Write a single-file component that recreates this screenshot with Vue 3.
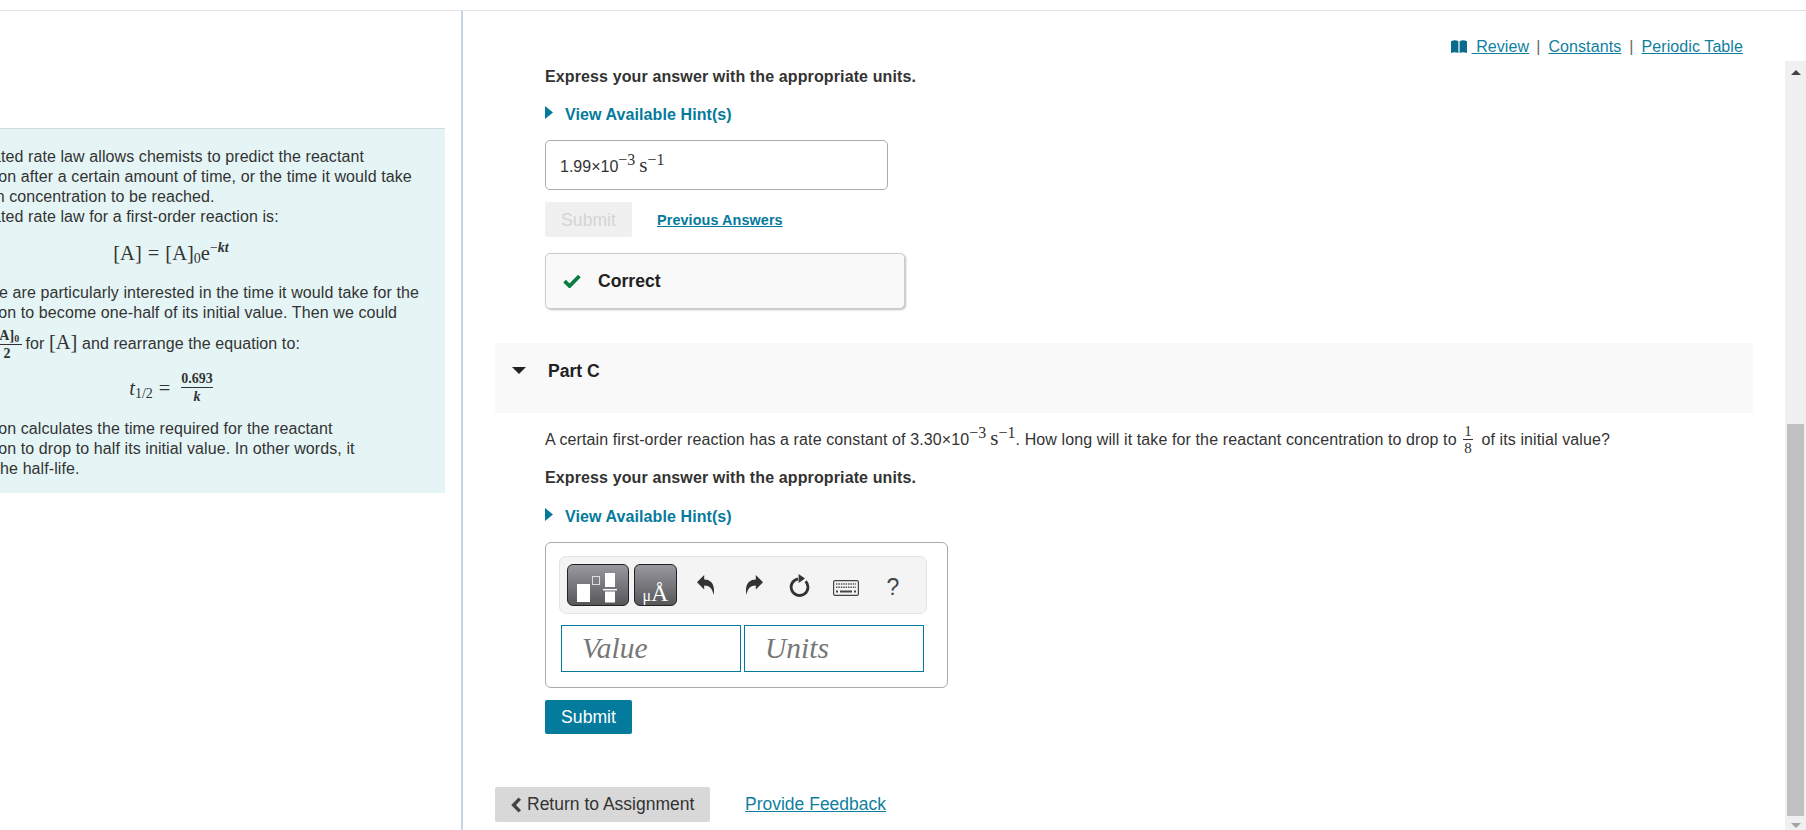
<script setup>
const sharedHint = 'View Available Hint(s)'
</script>

<template>
  <div class="page">
    <aside class="left">
      <section class="intro">
        <div class="intro-inner">
          <p>The integrated rate law allows chemists to predict the reactant<br>concentration after a certain amount of time, or the time it would take<br>for a certain concentration to be reached.<br>The integrated rate law for a first-order reaction is:</p>
          <div class="eq eq1">
            <span class="m big">[A]<span class="op">=</span>[A]<sub>0</sub>e<sup><span class="minus">−</span><b><i>kt</i></b></sup></span>
          </div>
          <p>Suppose we are particularly interested in the time it would take for the<br>concentration to become one-half of its initial value. Then we could</p>
          <p class="fracline">substitute
            <span class="frac small shifted"><span class="num">[A]<sub>0</sub></span><span class="den">2</span></span>
            for <span class="m big">[A]</span> and rearrange the equation to:</p>
          <div class="eq eq2">
            <span class="m big"><i>t</i><sub>1/2</sub><span class="op">=</span></span>
            <span class="frac small"><span class="num">0.693</span><span class="den"><b><i>k</i></b></span></span>
          </div>
          <p>This equation calculates the time required for the reactant<br>concentration to drop to half its initial value. In other words, it<br>calculates the half-life.</p>
        </div>
      </section>
    </aside>

    <main class="right">
      <nav class="toplinks">
        <svg class="book" viewBox="0 0 16 13" width="16" height="13" aria-hidden="true">
          <path d="M0 1.2 C2.5 0 5.5 0 7.4 1.2 V13 C5.5 11.9 2.5 11.9 0 13 Z M8.6 1.2 C10.5 0 13.5 0 16 1.2 V13 C13.5 11.9 10.5 11.9 8.6 13 Z" fill="#0b6b8c"/>
        </svg>
        <a class="link review">&nbsp;Review</a>
        <span class="sep first-sep">|</span>
        <a class="link">Constants</a>
        <span class="sep">|</span>
        <a class="link">Periodic Table</a>
      </nav>

      <div class="body">
        <div class="content">
          <div class="indent">
            <p class="strong first">Express your answer with the appropriate units.</p>
            <div class="hint">
              <svg class="tri" viewBox="0 0 8 13" width="8" height="13"><path d="M0 0 L8 6.5 L0 13 Z" fill="#047a9c"/></svg>
              <span>{{ sharedHint }}</span>
            </div>
            <div class="answer">
              <span>1.99×10</span><span class="exp">−3</span><span class="unit">s</span><span class="exp">−1</span>
            </div>
            <div class="actions">
              <span class="btn disabled">Submit</span>
              <a class="prev">Previous Answers</a>
            </div>
            <div class="correct">
              <svg viewBox="0 0 18 14" width="18" height="14"><path d="M1.6 7.2 L6.6 12 L16.4 2" fill="none" stroke="#0a7d3e" stroke-width="3.8"/></svg>
              <span>Correct</span>
            </div>
          </div>

          <div class="band">
            <svg viewBox="0 0 14 7" width="14" height="7"><path d="M0 0 H14 L7 7 Z" fill="#222"/></svg>
            <span>Part C</span>
          </div>

          <div class="indent">
            <div class="question">A certain first-order reaction has a rate constant of 3.30×10<span class="exp">−3</span><span class="unit">s</span><span class="exp">−1</span>. How long will it take for the reactant concentration to drop to <span class="qfrac"><span class="qn">1</span><span class="qd">8</span></span> of its initial value?</div>
            <p class="strong gap">Express your answer with the appropriate units.</p>
            <div class="hint lower">
              <svg class="tri" viewBox="0 0 8 13" width="8" height="13"><path d="M0 0 L8 6.5 L0 13 Z" fill="#047a9c"/></svg>
              <span>{{ sharedHint }}</span>
            </div>

            <div class="widget">
              <div class="toolbar">
                <div class="tbtn tpl">
                  <svg viewBox="1 1 60 40" width="60" height="40">
                    <rect x="10" y="20" width="13" height="18" fill="#fff"/>
                    <rect x="25.5" y="12.5" width="7" height="8" fill="none" stroke="#ddd" stroke-width="1"/>
                    <rect x="38" y="9" width="10" height="14" fill="#fff"/>
                    <rect x="36" y="25" width="14" height="1.4" fill="#fff"/>
                    <rect x="38" y="27.5" width="10" height="11" fill="#fff"/>
                  </svg>
                </div>
                <div class="tbtn mu"><span class="mu1">μ</span><span class="mu2">Å</span></div>
                <div class="tool t-undo">
                  <svg viewBox="0 0 18 20" width="18" height="20"><path d="M0 7.2 L7.2 0 V4.6 C13.5 4.6 18.6 9 16.6 20 C15.4 13.6 12.4 10.6 7.2 10.6 V14.4 Z" fill="#333"/></svg>
                </div>
                <div class="tool t-redo">
                  <svg viewBox="0 0 18 20" width="18" height="20"><path d="M18 7.2 L10.8 0 V4.6 C4.5 4.6 -0.6 9 1.4 20 C2.6 13.6 5.6 10.6 10.8 10.6 V14.4 Z" fill="#333"/></svg>
                </div>
                <div class="tool t-reset">
                  <svg viewBox="0 0 21 23" width="21" height="23">
                    <path d="M9 4.8 A8.4 8.4 0 1 0 16.6 7.2" fill="none" stroke="#333" stroke-width="2.8"/>
                    <path d="M9.6 0 L16 4.6 L9.6 9 Z" fill="#333"/>
                  </svg>
                </div>
                <div class="tool t-keys">
                  <svg viewBox="0 0 26 16" width="26" height="16">
                    <rect x="0.6" y="0.6" width="24.8" height="14.8" rx="1.4" fill="#f4f4f4" stroke="#444" stroke-width="1.2"/>
                    <path d="M3 4 H23" stroke="#555" stroke-width="1.6" stroke-dasharray="1.5 0.9"/>
                    <path d="M3 7.2 H23" stroke="#555" stroke-width="1.6" stroke-dasharray="1.5 0.9"/>
                    <path d="M3 11.5 H5 M7 11.5 H19 M21 11.5 H23" stroke="#444" stroke-width="1.8"/>
                  </svg>
                </div>
                <div class="tool t-help">?</div>
              </div>
              <div class="fields">
                <div class="field">Value</div>
                <div class="field">Units</div>
              </div>
            </div>

            <span class="btn primary">Submit</span>
          </div>

          <div class="footer">
            <span class="back">
              <svg viewBox="0 0 11 16" width="11" height="16"><path d="M8.8 1.6 L2.6 8 L8.8 14.4" fill="none" stroke="#444" stroke-width="3.4"/></svg>
              <span class="back-label">Return to Assignment</span>
            </span>
            <a class="link feedback">Provide Feedback</a>
          </div>
        </div>

        <div class="scrollbar" aria-hidden="true">
          <span class="arrow up"></span>
          <span class="thumb"></span>
          <span class="arrow down"></span>
        </div>
      </div>
    </main>
  </div>
</template>

<style>
html, body { margin: 0; background: #fff; overflow: hidden; }
</style>

<style scoped>
.page {
  width: 1806px;
  height: 830px;
  box-sizing: border-box;
  padding-top: 10px;
  display: flex;
  overflow: hidden;
  font-family: "Liberation Sans", Arial, sans-serif;
  font-size: 16px;
  line-height: 20px;
  letter-spacing: .09px;
  color: #333;
  background: linear-gradient(#e2e2e2, #e2e2e2) 0 10px / 100% 1px no-repeat #fff;
}
p { margin: 0; }

/* left passage */
.left {
  width: 461px;
  margin-top: 1px;
  flex: none;
  box-sizing: content-box;
  border-right: 2px solid #c6d5e3;
}
.intro {
  margin-top: 117px;
  width: 445px;
  height: 365px;
  box-sizing: border-box;
  border-top: 1px solid #d5dcdf;
  background: #e5f5f6;
  overflow: hidden;
}
.intro-inner {
  margin-left: -103px;
  width: 548px;
  box-sizing: border-box;
  padding: 18px 22px 0;
  white-space: nowrap;
}
.m { font-family: "Liberation Serif", serif; letter-spacing: 0; }
.big { font-size: 20.5px; }
.m sub, .m sup { font-size: 14px; line-height: 0; }
.m sup { vertical-align: 8px; }
.m sub { vertical-align: -3px; }
.op { margin: 0 6px; }
.minus { font-family: "Liberation Serif", serif; }
.eq { display: flex; align-items: center; justify-content: center; gap: 5px; }
.eq1 { height: 56px; box-sizing: border-box; padding-bottom: 4px; }
.eq2 { height: 57px; box-sizing: border-box; padding-bottom: 3px; margin-bottom: 1px; }
.fracline { height: 38px; line-height: 38px; }
.frac {
  display: inline-flex;
  flex-direction: column;
  align-items: center;
  vertical-align: middle;
  font-family: "Liberation Serif", serif;
  letter-spacing: 0;
  line-height: 1;
}
.shifted { margin-left: -1px; margin-right: -1px; }
.frac.small { font-size: 14px; font-weight: 700; }
.frac .num { padding: 0 0 1px; border-bottom: 1px solid #333; min-width: 30px; text-align: center; }
.frac .den { padding-top: 2px; }
.frac sub { font-size: 10px; line-height: 0; vertical-align: -2px; }

/* right */
.right { flex: 1; min-width: 0; margin-top: 1px; display: flex; flex-direction: column; }
.toplinks {
  height: 50px;
  box-sizing: border-box;
  padding: 26px 63px 0 0;
  display: flex;
  justify-content: flex-end;
  align-items: flex-start;
}
.book { margin: 3px 5px 0 0; }
.link { color: #0f7f9f; text-decoration: underline; cursor: pointer; }
.sep { margin: 0 8px; color: #666; }
.first-sep { margin-left: 7px; }
.body { flex: 1; display: flex; min-height: 0; }
.content { flex: 1; min-width: 0; padding: 0 32px; }
.indent { padding-left: 50px; }
.strong { font-weight: 700; letter-spacing: .12px; }
.first { margin-top: 6px; }
.gap { margin-top: 19px; }
.hint {
  margin-top: 18px;
  display: flex;
  gap: 12px;
  font-weight: 700;
  color: #047a9c;
}
.lower { margin-top: 19px; }
.tri { margin-top: 1px; flex: none; }
.answer {
  margin-top: 15px;
  width: 343px;
  height: 50px;
  box-sizing: border-box;
  border: 1px solid #aaa;
  border-radius: 5px;
  padding: 16px 14px 0;
  letter-spacing: 0;
}
.exp { font-family: "Liberation Serif", serif; font-size: 16px; letter-spacing: 0; position: relative; top: -7px; }
.unit { font-family: "Liberation Serif", serif; font-size: 21px; letter-spacing: 0; margin-left: 4px; line-height: 0; }
.actions { margin-top: 12px; display: flex; align-items: center; gap: 25px; }
.btn {
  display: flex;
  align-items: center;
  justify-content: center;
  width: 87px;
  height: 35px;
  border-radius: 2px;
  font-size: 17.6px;
  letter-spacing: 0;
}
.disabled { background: #f0f0f0; color: #d4d4d4; }
.prev { font-size: 14.4px; font-weight: 700; color: #047a9c; text-decoration: underline; }
.correct {
  margin-top: 16px;
  width: 360px;
  height: 56px;
  box-sizing: border-box;
  border: 1px solid #ccc;
  border-radius: 5px;
  background: #f9f9f9;
  box-shadow: 1px 1px 2px rgba(0, 0, 0, .25);
  display: flex;
  align-items: center;
  padding-left: 17px;
  gap: 17px;
  font-size: 17.6px;
  font-weight: 700;
  letter-spacing: 0;
  color: #222;
}
.band {
  margin-top: 34px;
  height: 70px;
  box-sizing: border-box;
  background: #f9f9f9;
  padding: 18px 0 0 17px;
  display: flex;
  gap: 22px;
  font-size: 17.6px;
  font-weight: 700;
  letter-spacing: 0;
  color: #222;
}
.band svg { margin-top: 6px; }
.question { margin-top: 12px; height: 24px; white-space: nowrap; letter-spacing: .11px; }
.qfrac {
  display: inline-flex;
  flex-direction: column;
  align-items: center;
  vertical-align: middle;
  font-family: "Liberation Serif", serif;
  font-size: 15px;
  line-height: 1;
  margin: 0 4px 0 2px;
  position: relative;
  top: -1px;
}
.qn { border-bottom: 1px solid #333; padding: 0 1px; }
.qd { padding-top: 1px; }

.widget {
  margin-top: 15px;
  width: 403px;
  height: 146px;
  box-sizing: border-box;
  border: 1px solid #aaa;
  border-radius: 6px;
  padding: 13px 0 0 13px;
}
.toolbar {
  width: 368px;
  height: 58px;
  box-sizing: border-box;
  background: #f4f4f4;
  border: 1px solid #e4e4e4;
  border-radius: 7px;
  display: flex;
  align-items: center;
  padding-left: 7px;
  letter-spacing: 0;
}
.tbtn {
  height: 42px;
  box-sizing: border-box;
  border: 1px solid #222;
  border-radius: 6px;
  background: linear-gradient(#9a98a0, #57575a);
  flex: none;
}
.tpl { width: 62px; margin-right: 5px; }
.tpl svg { display: block; }
.mu {
  width: 43px;
  display: flex;
  align-items: flex-end;
  justify-content: center;
  color: #fff;
  font-family: "Liberation Serif", serif;
  line-height: 1;
}
.mu1 { font-size: 16px; padding-bottom: 1px; }
.mu2 { font-size: 24px; }
.tool { height: 100%; display: flex; align-items: center; justify-content: center; flex: none; }
.t-undo { width: 52px; padding-left: 6px; box-sizing: border-box; }
.t-redo { width: 50px; }
.t-reset { width: 41px; }
.t-keys { width: 52px; padding-top: 6px; box-sizing: border-box; }
.t-help { width: 42px; font-size: 23px; color: #444; padding-top: 4px; box-sizing: border-box; }
.fields { margin: 11px 0 0 2px; display: flex; gap: 3px; }
.field {
  width: 180px;
  height: 47px;
  box-sizing: border-box;
  border: 1px solid #047a9c;
  padding-left: 20px;
  font-family: "Liberation Serif", serif;
  font-style: italic;
  font-size: 29.5px;
  line-height: 44px;
  letter-spacing: 0;
  color: #777;
}
.primary {
  margin-top: 12px;
  height: 34px;
  background: #047a9c;
  color: #fff;
}
.footer { margin-top: 53px; display: flex; align-items: center; gap: 35px; font-size: 17.5px; letter-spacing: 0; }
.feedback { margin-top: -2px; }
.back {
  width: 215px;
  height: 35px;
  box-sizing: border-box;
  background: #d8d8d8;
  border-radius: 2px;
  display: flex;
  align-items: center;
  padding-left: 16px;
  gap: 5px;
  color: #333;
}
.back-label { margin-top: -2px; }

/* scrollbar */
.scrollbar {
  width: 21px;
  flex: none;
  background: #f0f0f0;
  display: flex;
  flex-direction: column;
  align-items: center;
}
.arrow { width: 0; height: 0; border-left: 5px solid transparent; border-right: 5px solid transparent; }
.up { margin-top: 9px; border-bottom: 5px solid #444; }
.thumb { margin-top: 349px; width: 17px; height: 392px; background: #c0c0c0; }
.down { margin-top: 7px; border-top: 5px solid #a3a3a3; }
</style>
